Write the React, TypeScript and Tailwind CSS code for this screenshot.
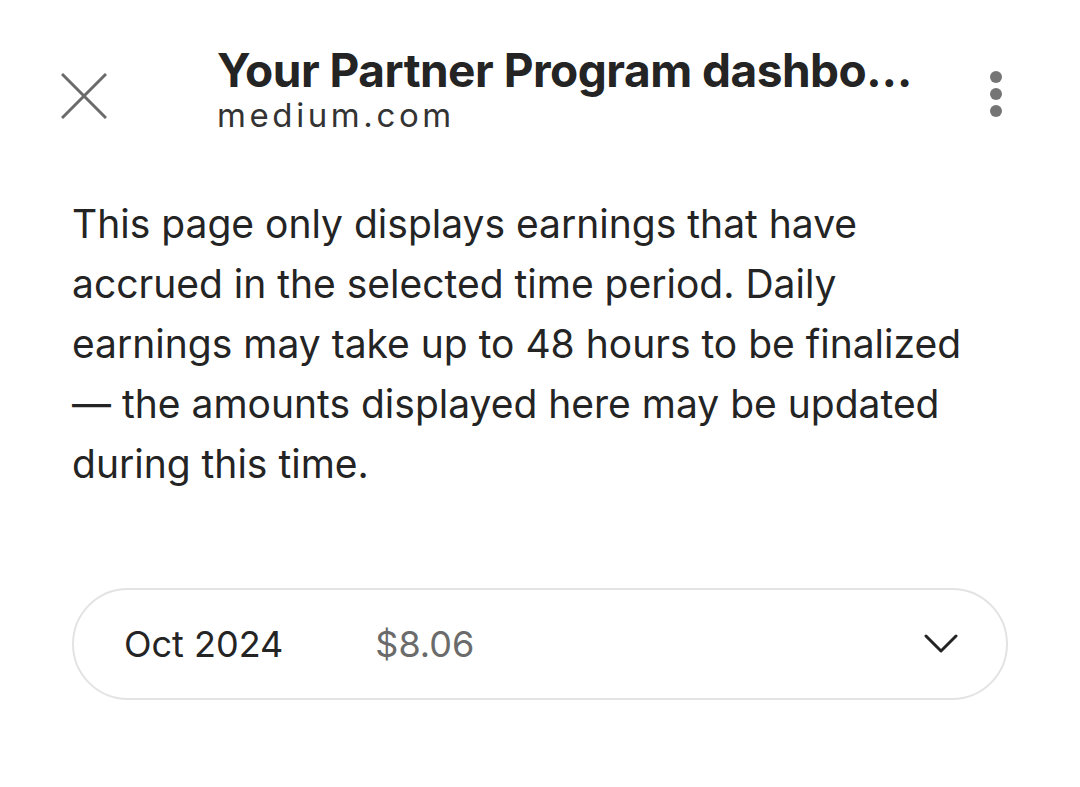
export default function App() {
  return (
    <div className="w-[1080px] h-[787px] bg-white text-[#242424] font-['Inter','Liberation_Sans',sans-serif]">
      <header className="flex items-start pt-[40px]">
        <button className="w-[72px] ml-[48px] mt-[20px] h-[72px] flex items-center justify-center text-[#6b6b6b]">
          <svg width="46" height="46" viewBox="0 0 46 46" fill="none" stroke="currentColor" strokeWidth="3">
            <path d="M1 1 L45 45 M45 1 L1 45" />
          </svg>
        </button>
        <div className="ml-[97px] flex-1">
          <div className="text-[46px] leading-[60px] font-bold tracking-[-0.5px]">Your Partner Program dashbo…</div>
          <div className="text-[33px] leading-[30px] tracking-[3.6px] text-[#333]">medium.com</div>
        </div>
        <div className="mr-[78px] mt-[31px] flex flex-col gap-[5px]">
          <span className="w-[12px] h-[12px] rounded-full bg-[#757575]" />
          <span className="w-[12px] h-[12px] rounded-full bg-[#757575]" />
          <span className="w-[12px] h-[12px] rounded-full bg-[#757575]" />
        </div>
      </header>

      <p className="mt-[62px] ml-[72px] max-w-[900px] text-[39px] leading-[60px]">
        This page only displays earnings that have accrued in the selected time period. Daily earnings may take up to 48 hours to be finalized — the amounts displayed here may be updated during this time.
      </p>

      <div className="mx-[72px] mt-[94px] h-[112px] rounded-full border-2 border-[#e3e3e3] flex items-center pl-[50px] pr-[48px]">
        <span className="text-[36px]">Oct 2024</span>
        <span className="ml-[92px] text-[36px] text-[#6b6b6b]">$8.06</span>
        <svg className="ml-auto" width="34" height="20" viewBox="0 0 34 20" fill="none" stroke="#242424" strokeWidth="3" strokeLinecap="round" strokeLinejoin="round">
          <path d="M2 2 L17 17 L32 2" />
        </svg>
      </div>
    </div>
  );
}
